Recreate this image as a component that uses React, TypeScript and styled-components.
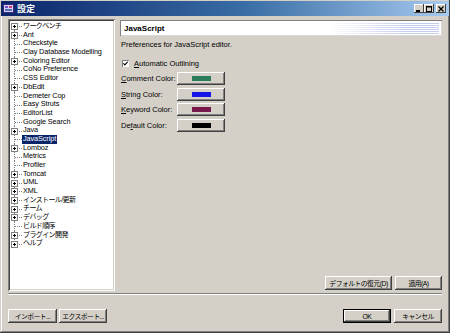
import React from "react";
import styled, { createGlobalStyle } from "styled-components";

const FACE = "#d4d0c8";
const UI_FONT = `"Liberation Sans", "Noto Sans CJK JP", sans-serif`;

const GlobalStyle = createGlobalStyle`
  html, body {
    margin: 0;
    padding: 0;
    background: ${FACE};
  }
  * {
    box-sizing: border-box;
  }
`;

const Window = styled.div`
  width: 450px;
  height: 333px;
  background: ${FACE};
  display: flex;
  flex-direction: column;
  padding: 1px;
  font-family: ${UI_FONT};
  font-size: 7.5px;
  color: #000;
  box-shadow: inset -1px -1px #404040, inset 1px 1px ${FACE},
    inset -2px -2px #808080, inset 2px 2px #fff;
`;

const TitleBar = styled.div`
  height: 15px;
  display: flex;
  align-items: center;
  padding: 0 3px 0 2px;
  background: linear-gradient(to right, #0a246a 0%, #3a6ea5 55%, #a6caf0 100%);
  color: #fff;
`;

const TitleIcon = styled.svg`
  width: 11px;
  height: 11px;
  margin-right: 3px;
  flex-shrink: 0;
`;

const TitleText = styled.span`
  font-size: 9px;
  font-weight: bold;
  flex: 1;
`;

const Controls = styled.div`
  display: flex;
  align-items: center;
`;

const CtrlButton = styled.div<{ gapLeft?: boolean }>`
  width: 10px;
  height: 9px;
  margin-left: ${(p) => (p.gapLeft ? "2px" : "0")};
  background: ${FACE};
  display: flex;
  align-items: center;
  justify-content: center;
  box-shadow: inset -1px -1px #404040, inset 1px 1px #fff;
  svg {
    width: 6px;
    height: 6px;
  }
`;

const Body = styled.div`
  flex: 1;
  display: flex;
  flex-direction: column;
  padding: 3px 7px 0 7px;
`;

const Main = styled.div`
  height: 272px;
  display: flex;
  gap: 5px;
`;

const Tree = styled.div`
  width: 107px;
  background: #fff;
  padding: 3px 2px;
  box-shadow: inset 1px 1px #808080, inset -1px -1px #fff,
    inset 2px 2px #404040, inset -2px -2px ${FACE};
  overflow: hidden;
`;

const TreeRow = styled.div`
  height: 8.7px;
  display: flex;
  align-items: center;
  white-space: nowrap;
`;

const Connector = styled.div<{ first?: boolean; last?: boolean }>`
  width: 12px;
  height: 100%;
  position: relative;
  flex-shrink: 0;
  &::before {
    content: "";
    position: absolute;
    left: 4px;
    top: ${(p) => (p.first ? "50%" : "0")};
    bottom: ${(p) => (p.last ? "50%" : "0")};
    border-left: 1px dotted #808080;
  }
  &::after {
    content: "";
    position: absolute;
    left: 5px;
    right: 0;
    top: 50%;
    border-top: 1px dotted #808080;
  }
`;

const Expander = styled.div`
  position: absolute;
  left: 1px;
  top: 50%;
  margin-top: -3px;
  width: 7px;
  height: 7px;
  border: 1px solid #808080;
  background: #fff;
  z-index: 1;
  &::before {
    content: "";
    position: absolute;
    left: 1px;
    right: 1px;
    top: 2px;
    height: 1px;
    background: #000;
  }
  &::after {
    content: "";
    position: absolute;
    top: 1px;
    bottom: 1px;
    left: 2px;
    width: 1px;
    background: #000;
  }
`;

const TreeLabel = styled.span<{ selected?: boolean; cjk?: boolean }>`
  padding: 0 1px;
  line-height: 8.7px;
  font-size: ${(p) => (p.cjk ? "7px" : "7.3px")};
  letter-spacing: ${(p) => (p.cjk ? "-0.6px" : "-0.1px")};
  background: ${(p) => (p.selected ? "#0a246a" : "transparent")};
  color: ${(p) => (p.selected ? "#fff" : "#000")};
`;

const Page = styled.div`
  flex: 1;
  display: flex;
  flex-direction: column;
  padding-top: 1px;
`;

const Banner = styled.div`
  height: 16px;
  display: flex;
  align-items: center;
  background: #fff;
  padding-left: 4px;
  box-shadow: inset 1px 1px #808080, inset -1px -1px #d8d8d8;
  overflow: hidden;
`;

const BannerTitle = styled.span`
  font-weight: bold;
  font-size: 8px;
  flex: 1;
`;

const BannerStripes = styled.div`
  width: 110px;
  height: 12px;
  margin-right: 3px;
  background: repeating-linear-gradient(
    to bottom,
    #ffffff 0px,
    #ffffff 1px,
    #c4cdef 1px,
    #c4cdef 2px
  );
  -webkit-mask-image: linear-gradient(to right, transparent, #000 70%);
  mask-image: linear-gradient(to right, transparent, #000 70%);
`;

const Description = styled.div`
  margin-top: 4px;
  padding-left: 1px;
  height: 9px;
  line-height: 9px;
`;

const CheckRow = styled.label`
  margin-top: 10px;
  display: flex;
  align-items: center;
  gap: 5px;
  padding-left: 2px;
  height: 9px;
`;

const CheckBox = styled.div`
  width: 7px;
  height: 7px;
  background: #fff;
  box-shadow: inset 1px 1px #808080, inset -1px -1px #fff;
  display: flex;
  align-items: center;
  justify-content: center;
  svg {
    width: 5px;
    height: 5px;
  }
`;

const ColorGrid = styled.div`
  margin-top: 4px;
  display: grid;
  grid-template-columns: 56px 48px;
  row-gap: 2.7px;
  align-items: center;
  padding-left: 1px;
`;

const ColorLabel = styled.span``;

const ColorButton = styled.div`
  height: 13px;
  display: flex;
  align-items: center;
  justify-content: center;
  background: ${FACE};
  box-shadow: inset -1px -1px #404040, inset 1px 1px #fff,
    inset -2px -2px #808080;
`;

const Swatch = styled.div<{ color: string }>`
  width: 19px;
  height: 5px;
  background: ${(p) => p.color};
`;

const PageButtons = styled.div`
  margin-top: auto;
  display: flex;
  justify-content: flex-end;
  gap: 3px;
  padding-bottom: 1px;
`;

const Button = styled.div<{ width: number; isDefault?: boolean }>`
  width: ${(p) => p.width}px;
  height: 14px;
  display: flex;
  align-items: center;
  justify-content: center;
  background: ${FACE};
  font-size: 6.8px;
  letter-spacing: -0.5px;
  white-space: nowrap;
  box-shadow: ${(p) =>
    p.isDefault
      ? "inset 0 0 0 1px #000, inset -2px -2px #404040, inset 2px 2px #fff, inset -3px -3px #808080"
      : "inset -1px -1px #404040, inset 1px 1px #fff, inset -2px -2px #808080"};
`;

const Separator = styled.div`
  margin-top: 2px;
  height: 2px;
  border-top: 1px solid #808080;
  border-bottom: 1px solid #fff;
`;

const Footer = styled.div`
  margin-top: 14px;
  display: flex;
  align-items: center;
  justify-content: space-between;
`;

const ButtonGroup = styled.div<{ gap: number }>`
  display: flex;
  gap: ${(p) => p.gap}px;
`;

const treeItems: { label: string; expandable: boolean; selected?: boolean }[] = [
  { label: "ワークベンチ", expandable: true },
  { label: "Ant", expandable: true },
  { label: "Checkstyle", expandable: false },
  { label: "Clay Database Modelling", expandable: false },
  { label: "Coloring Editor", expandable: true },
  { label: "CoNo Preference", expandable: false },
  { label: "CSS Editor", expandable: false },
  { label: "DbEdit", expandable: true },
  { label: "Demeter Cop", expandable: false },
  { label: "Easy Struts", expandable: false },
  { label: "EditorList", expandable: false },
  { label: "Google Search", expandable: false },
  { label: "Java", expandable: true },
  { label: "JavaScript", expandable: false, selected: true },
  { label: "Lomboz", expandable: true },
  { label: "Metrics", expandable: false },
  { label: "Profiler", expandable: false },
  { label: "Tomcat", expandable: true },
  { label: "UML", expandable: true },
  { label: "XML", expandable: true },
  { label: "インストール/更新", expandable: true },
  { label: "チーム", expandable: true },
  { label: "デバッグ", expandable: true },
  { label: "ビルド順序", expandable: false },
  { label: "プラグイン開発", expandable: true },
  { label: "ヘルプ", expandable: true },
];

const colorRows: { pre: string; key: string; post: string; color: string }[] = [
  { pre: "", key: "C", post: "omment Color:", color: "#2b7a5c" },
  { pre: "", key: "S", post: "tring Color:", color: "#1414e6" },
  { pre: "", key: "K", post: "eyword Color:", color: "#78184c" },
  { pre: "De", key: "f", post: "ault Color:", color: "#000000" },
];

const isCjk = (s: string) => /[\u3000-\u9fff]/.test(s);

const App = () => {
  return (
    <>
      <GlobalStyle />
      <Window>
        <TitleBar>
          <TitleIcon viewBox="0 0 11 11">
            <rect x="0.5" y="1.5" width="10" height="8" fill="#d8d0f0" stroke="#3a2a80" />
            <rect x="2" y="3" width="3" height="2" fill="#7a50c0" />
            <rect x="6" y="3" width="3" height="2" fill="#c04070" />
            <rect x="2" y="6" width="7" height="2" fill="#5070c0" />
          </TitleIcon>
          <TitleText>設定</TitleText>
          <Controls>
            <CtrlButton>
              <svg viewBox="0 0 6 6">
                <rect x="0" y="4" width="4" height="2" fill="#000" />
              </svg>
            </CtrlButton>
            <CtrlButton>
              <svg viewBox="0 0 6 6">
                <rect x="0.5" y="0.5" width="5" height="5" fill="none" stroke="#000" />
                <rect x="0" y="0" width="6" height="1.5" fill="#000" />
              </svg>
            </CtrlButton>
            <CtrlButton gapLeft>
              <svg viewBox="0 0 6 6">
                <path d="M0.5 0.5 L5.5 5.5 M5.5 0.5 L0.5 5.5" stroke="#000" strokeWidth="1.3" />
              </svg>
            </CtrlButton>
          </Controls>
        </TitleBar>

        <Body>
          <Main>
            <Tree>
              {treeItems.map((item, i) => (
                <TreeRow key={item.label}>
                  <Connector first={i === 0} last={i === treeItems.length - 1}>
                    {item.expandable && <Expander />}
                  </Connector>
                  <TreeLabel selected={item.selected} cjk={isCjk(item.label)}>
                    {item.label}
                  </TreeLabel>
                </TreeRow>
              ))}
            </Tree>

            <Page>
              <Banner>
                <BannerTitle>JavaScript</BannerTitle>
                <BannerStripes />
              </Banner>
              <Description>Preferences for JavaScript editor.</Description>
              <CheckRow>
                <CheckBox>
                  <svg viewBox="0 0 5 5">
                    <path d="M0.3 2.3 L1.8 3.8 L4.7 0.8" stroke="#000" strokeWidth="1.2" fill="none" />
                  </svg>
                </CheckBox>
                <span>
                  <u>A</u>utomatic Outlining
                </span>
              </CheckRow>
              <ColorGrid>
                {colorRows.map((row) => (
                  <React.Fragment key={row.post}>
                    <ColorLabel>
                      {row.pre}
                      <u>{row.key}</u>
                      {row.post}
                    </ColorLabel>
                    <ColorButton>
                      <Swatch color={row.color} />
                    </ColorButton>
                  </React.Fragment>
                ))}
              </ColorGrid>
              <PageButtons>
                <Button width={67}>デフォルトの復元(D)</Button>
                <Button width={47}>適用(A)</Button>
              </PageButtons>
            </Page>
          </Main>

          <Separator />

          <Footer>
            <ButtonGroup gap={2}>
              <Button width={49}>インポート...</Button>
              <Button width={48}>エクスポート...</Button>
            </ButtonGroup>
            <ButtonGroup gap={3}>
              <Button width={48} isDefault>
                OK
              </Button>
              <Button width={48}>キャンセル</Button>
            </ButtonGroup>
          </Footer>
        </Body>
      </Window>
    </>
  );
};

export default App;
